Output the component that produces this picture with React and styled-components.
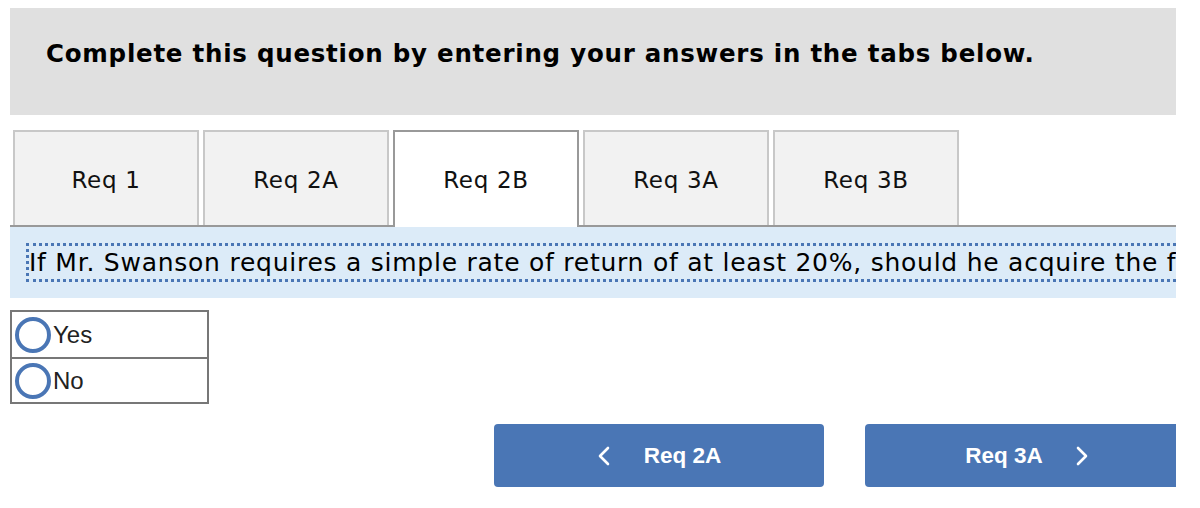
import React from 'react';
import styled, { createGlobalStyle } from 'styled-components';

const Global = createGlobalStyle`
  body { margin: 0; background: #fff; font-family: "DejaVu Sans", Verdana, sans-serif; }
`

const Page = styled.div`margin: 8px 0 0 10px; width: 1166px; overflow: hidden;`
const Header = styled.div`height: 107px; background: #e0e0e0; display: flex; align-items: center; padding-left: 36px; box-sizing: border-box;`
const HeaderText = styled.h1`margin: 0 0 16px; font-size: 24.5px; font-weight: bold; color: #000; letter-spacing: 0.75px; white-space: nowrap;`
const Tabs = styled.div`display: flex; gap: 4px; margin-top: 15px; padding-left: 3px; border-bottom: 2px solid #999;`
const Tab = styled.div`
  width: 186px; box-sizing: border-box; display: flex; align-items: center; justify-content: center;
  font-size: 23px; letter-spacing: 0.7px; color: #111; padding-top: 3px;
  border: 2px solid ${p => p.active ? '#999' : '#c8c8c8'};
  border-bottom: none;
  background: ${p => p.active ? '#fff' : '#f2f2f2'};
  margin-bottom: ${p => p.active ? '-2px' : '0'};
  height: ${p => p.active ? '97px' : '95px'};
  padding-bottom: ${p => p.active ? '2px' : '0'};
`
const Panel = styled.div`background: #dcebf8; height: 71px; padding: 16px 0 0 16px; box-sizing: border-box;`
const Question = styled.div`
  border: 3px dotted #4a76b5; border-right: none; white-space: nowrap; font-size: 25px; letter-spacing: 0.75px; color: #000;
  height: 39px; box-sizing: border-box; line-height: 33px;
`
const Choices = styled.div`margin-top: 12px; width: 199px; border: 2px solid #777; box-sizing: border-box;`
const Choice = styled.label`
  display: flex; align-items: center; gap: 2px; height: 45px; box-sizing: border-box; padding-left: 3px;
  font-family: "Liberation Sans", Arial, sans-serif; font-size: 24px; color: #222;
  & + & { border-top: 2px solid #777; }
`
const Ring = styled.span`width: 28px; height: 28px; border: 4px solid #4a76b5; border-radius: 50%; display: inline-block;`
const ButtonRow = styled.div`display: flex; gap: 41px; padding-left: 484px; margin-top: 20px;`
const NavButton = styled.button`
  flex: none; width: 330px; height: 63px; border: none; border-radius: 4px; background: #4a76b5; color: #fff;
  display: flex; align-items: center; justify-content: center; gap: ${p => p.gap}px;
  font-family: "Liberation Sans", Arial, sans-serif; font-weight: bold; font-size: 22.5px; padding: 0 ${p => p.shift || 0}px 0 0;
`

const Chevron = ({ dir }) => (
  <svg width="14" height="22" viewBox="0 0 14 22">
    <path d={dir === 'left' ? 'M11 3 L3 11 L11 19' : 'M3 3 L11 11 L3 19'} fill="none" stroke="#fff" strokeWidth="2.6" strokeLinecap="round" strokeLinejoin="round" />
  </svg>
)

const App = () => {
  const tabs = ['Req 1', 'Req 2A', 'Req 2B', 'Req 3A', 'Req 3B']
  return (
    <>
      <Global />
      <Page>
        <Header>
          <HeaderText>Complete this question by entering your answers in the tabs below.</HeaderText>
        </Header>
        <Tabs>
          {tabs.map(t => <Tab key={t} active={t === 'Req 2B'}>{t}</Tab>)}
        </Tabs>
        <Panel>
          <Question>If Mr. Swanson requires a simple rate of return of at least 20%, should he acquire the franchise?</Question>
        </Panel>
        <Choices>
          <Choice><Ring />Yes</Choice>
          <Choice><Ring />No</Choice>
        </Choices>
        <ButtonRow>
          <NavButton gap={33}><Chevron dir="left" />Req 2A</NavButton>
          <NavButton gap={32} shift={6}>Req 3A<Chevron dir="right" /></NavButton>
        </ButtonRow>
      </Page>
    </>
  )
}

export default App;
